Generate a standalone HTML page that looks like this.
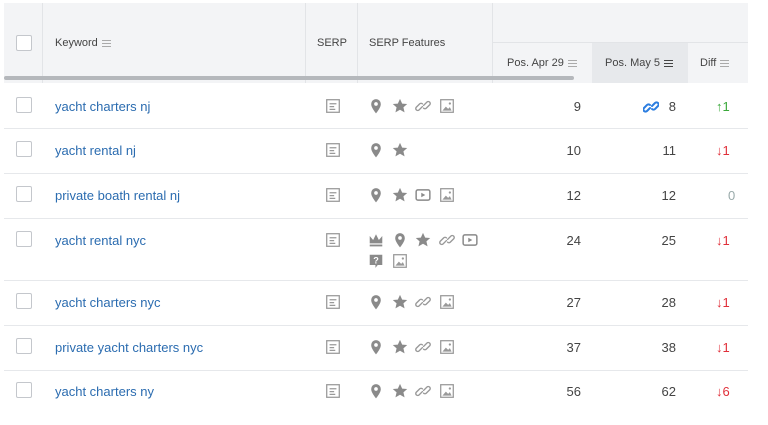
<!DOCTYPE html>
<html><head><meta charset="utf-8"><style>
body{margin:0;width:768px;height:425px;background:#fff;font-family:"Liberation Sans",sans-serif;position:relative;overflow:hidden}
.a{position:absolute}
.hd{left:4px;top:3px;width:744px;height:80px;background:#f3f4f6}
.vl{width:1px;background:#e2e4e7}
.ht{font-size:11px;color:#444}
.cb{width:14px;height:14px;border:1px solid #c4c7cc;border-radius:2px;background:#fff}
.kw{font-size:13px;color:#2b6cb0}
.hl{left:4px;width:744px;height:1px;background:#e6e8eb}
.n{font-size:13px;color:#444;text-align:right;width:40px}
.up{color:#3aa83a;font-size:13px;font-weight:bold}
.dn{color:#e0303a;font-size:13px;font-weight:bold}
.up span,.dn span{font-weight:normal}
.sort{display:inline-block;width:9px;height:7px;vertical-align:middle;margin-left:4px;background:linear-gradient(#aaa 0 1px,transparent 1px 3px,#aaa 3px 4px,transparent 4px 6px,#aaa 6px 7px)}
svg.i{position:absolute;width:16px;height:16px}
</style></head><body>
<div class="a hd"></div>
<div class="a" style="left:592px;top:43px;width:96px;height:40px;background:#e7e9ec"></div>
<div class="a" style="left:492px;top:42px;width:256px;height:1px;background:#e2e4e7"></div>
<div class="a vl" style="left:42px;top:3px;height:80px"></div>
<div class="a vl" style="left:305px;top:3px;height:80px"></div>
<div class="a vl" style="left:357px;top:3px;height:80px"></div>
<div class="a vl" style="left:492px;top:3px;height:80px"></div>
<div class="a" style="left:4px;top:76px;width:570px;height:4px;background:#b5b8bc;border-radius:2px"></div>
<div class="a cb" style="left:16px;top:35px"></div>
<div class="a ht" style="left:55px;top:37px">Keyword<span class="sort"></span></div>
<div class="a ht" style="left:317px;top:37px">SERP</div>
<div class="a ht" style="left:369px;top:37px">SERP Features</div>
<div class="a ht" style="left:507px;top:57px">Pos. Apr 29<span class="sort"></span></div>
<div class="a ht" style="left:605px;top:57px">Pos. May 5<span class="sort" style="background:linear-gradient(#444 0 1px,transparent 1px 3px,#444 3px 4px,transparent 4px 6px,#444 6px 7px)"></span></div>
<div class="a ht" style="left:700px;top:57px">Diff<span class="sort"></span></div>

<div class="a hl" style="top:128px"></div>
<div class="a hl" style="top:173px"></div>
<div class="a hl" style="top:218px"></div>
<div class="a hl" style="top:280px"></div>
<div class="a hl" style="top:325px"></div>
<div class="a hl" style="top:370px"></div>

<div class="a cb" style="left:16px;top:97px"></div><div class="a kw" style="left:55px;top:99px">yacht charters nj</div>
<div class="a cb" style="left:16px;top:141px"></div><div class="a kw" style="left:55px;top:143px">yacht rental nj</div>
<div class="a cb" style="left:16px;top:186px"></div><div class="a kw" style="left:55px;top:188px">private boath rental nj</div>
<div class="a cb" style="left:16px;top:231px"></div><div class="a kw" style="left:55px;top:233px">yacht rental nyc</div>
<div class="a cb" style="left:16px;top:293px"></div><div class="a kw" style="left:55px;top:295px">yacht charters nyc</div>
<div class="a cb" style="left:16px;top:338px"></div><div class="a kw" style="left:55px;top:340px">private yacht charters nyc</div>
<div class="a cb" style="left:16px;top:382px"></div><div class="a kw" style="left:55px;top:384px">yacht charters ny</div>

<div class="a n" style="left:541px;top:99px">9</div><div class="a n" style="left:636px;top:99px">8</div><div class="a up" style="left:716px;top:99px">↑<span>1</span></div>
<svg class="i" style="left:643px;top:99px;width:16px;height:16px" viewBox="0 0 16 16"><g fill="none" stroke="#2b7de0" stroke-width="2" stroke-linecap="round"><path d="M7 9l-3 3a2 2 0 0 1-3-3l3-3a2 2 0 0 1 3 0"/><path d="M9 7l3-3a2 2 0 0 1 3 3l-3 3a2 2 0 0 1-3 0"/></g></svg>
<div class="a n" style="left:541px;top:143px">10</div><div class="a n" style="left:636px;top:143px">11</div><div class="a dn" style="left:716px;top:143px">↓<span>1</span></div>
<div class="a n" style="left:541px;top:188px">12</div><div class="a n" style="left:636px;top:188px">12</div><div class="a" style="left:728px;top:188px;font-size:13px;color:#9aa">0</div>
<div class="a n" style="left:541px;top:233px">24</div><div class="a n" style="left:636px;top:233px">25</div><div class="a dn" style="left:716px;top:233px">↓<span>1</span></div>
<div class="a n" style="left:541px;top:295px">27</div><div class="a n" style="left:636px;top:295px">28</div><div class="a dn" style="left:716px;top:295px">↓<span>1</span></div>
<div class="a n" style="left:541px;top:340px">37</div><div class="a n" style="left:636px;top:340px">38</div><div class="a dn" style="left:716px;top:340px">↓<span>1</span></div>
<div class="a n" style="left:541px;top:384px">56</div><div class="a n" style="left:636px;top:384px">62</div><div class="a dn" style="left:716px;top:384px">↓<span>6</span></div>

<div id="ic"></div>
<script>
var S={
serp:'<rect x="1.5" y="1.5" width="11" height="11" fill="none" stroke="#999" stroke-width="1.1"/><path d="M4 5h6M4 7.5h4M4 10h5" stroke="#999" stroke-width="1.1"/>',
pin:'<path d="M7 13.5C4 9.5 2.8 7.3 2.8 5.2a4.2 4.2 0 0 1 8.4 0c0 2.1-1.2 4.3-4.2 8.3z" fill="#8a8a8a"/><circle cx="7" cy="5.2" r="1.6" fill="#fff"/>',
star:'<path d="M7 .8l1.9 4.1 4.4.4-3.3 2.9 1 4.4L7 10.3 3 12.6l1-4.4L.7 5.3l4.4-.4z" fill="#8a8a8a"/>',
link:'<g fill="none" stroke="#999" stroke-width="1.2" stroke-linecap="round"><path d="M6.5 7.5l-3 3a1.7 1.7 0 0 1-2.4-2.4l3-3a1.7 1.7 0 0 1 2.4 0"/><path d="M7.5 6.5l3-3a1.7 1.7 0 0 1 2.4 2.4l-3 3a1.7 1.7 0 0 1-2.4 0"/></g>',
img:'<rect x="1.5" y="1.5" width="11" height="11" fill="none" stroke="#999" stroke-width="1.1"/><path d="M3 11l3-3.5 2 2 1.5-1.5L11 11z" fill="#999"/><circle cx="9.5" cy="4.8" r="1" fill="#999"/>',
vid:'<rect x="1" y="2.5" width="12" height="9" rx="1.5" fill="none" stroke="#8a8a8a" stroke-width="1.3"/><path d="M5.5 5v4l3.5-2z" fill="#8a8a8a"/>',
crown:'<path d="M1.5 3.5l3 3.5L7 2l2.5 5 3-3.5V10h-11z" fill="#8a8a8a"/><rect x="1.5" y="11" width="11" height="1.6" fill="#8a8a8a"/>',
q:'<path d="M1.5 1.5h11v9H8.5l-2 2.5V10.5H1.5z" fill="#8a8a8a"/><text x="7" y="9" font-size="8" font-weight="bold" text-anchor="middle" fill="#fff" font-family="Liberation Sans">?</text>'
};
var rows=[[106,['pin','star','link','img']],[150,['pin','star']],[195,['pin','star','vid','img']],[240,['crown','pin','star','link','vid']],[261,['q','img']],[302,['pin','star','link','img']],[347,['pin','star','link','img']],[391,['pin','star','link','img']]];
var h='';
rows.forEach(function(r,k){var y=r[0]-8;
if(k!=4)h+='<svg class="i" viewBox="0 0 14 14" style="left:325px;top:'+y+'px">'+S.serp+'</svg>';
r[1].forEach(function(n,j){h+='<svg class="i" viewBox="0 0 14 14" style="left:'+(368+j*23.5)+'px;top:'+y+'px">'+S[n]+'</svg>';});});
document.getElementById('ic').innerHTML=h;
</script>
</body></html>
